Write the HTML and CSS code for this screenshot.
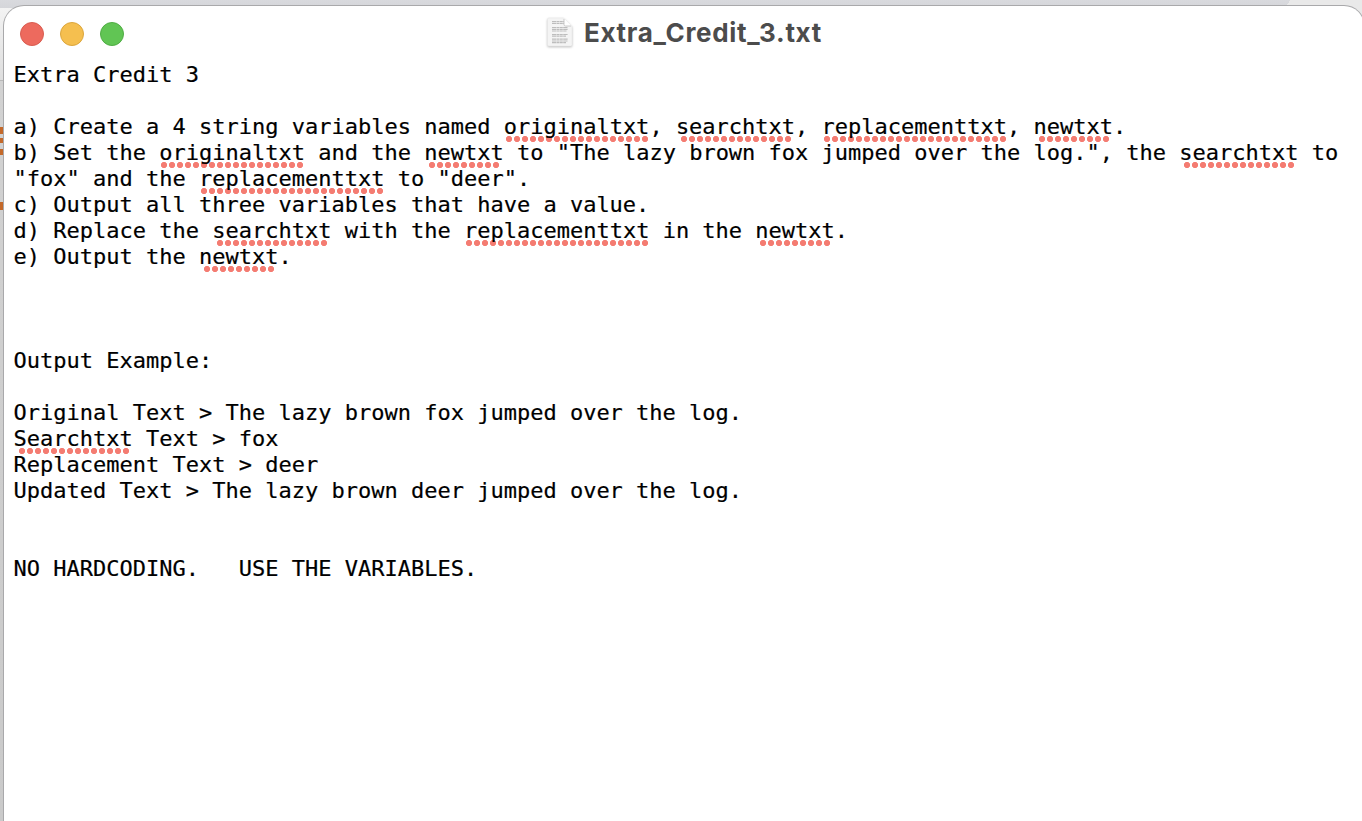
FILE: index.html
```html
<!DOCTYPE html>
<html lang="en">
<head>
    <meta charset="UTF-8">
    <meta name="viewport" content="width=device-width, initial-scale=1.0">
    <title>Extra_Credit_3.txt</title>
    <link rel="stylesheet" href="styles.css">
</head>
<body>
    <div class="window">
        <header class="titlebar">
            <div class="lights">
                <span class="light close"></span>
                <span class="light minimize"></span>
                <span class="light zoom"></span>
            </div>
            <div class="title">
                <svg class="doc-icon" width="28" height="32" viewBox="0 0 28 32">
                    <path class="page" d="M3 1H17.500L26 9.500V27.500Q26 29 24.500 29H3Q1.500 29 1.500 27.500V2.500Q1.500 1 3 1Z"/>
                    <path class="lines" d="M6 4.500H18M6 6.300H18M6 10.500H21.500M6 12.300H22M6 14H20.500M6 17.500H22M6 19.200H20M6 22.200H22M6 24H21.500M6 25.700H20"/>
                    <path class="fold" d="M18 1.500V7.500Q18 9 19.500 9H25.500Z"/>
                    <path class="crease" d="M18 2V7.500Q18 9 19.500 9H25"/>
                </svg>
                <h1>Extra_Credit_3.txt</h1>
            </div>
        </header>
<pre class="text">Extra Credit 3

a) Create a 4 string variables named <span class="typo w11">originaltxt</span>, <span class="typo w9">searchtxt</span>, <span class="typo w14">replacementtxt</span>, <span class="typo w6">newtxt</span>.
b) Set the <span class="typo w11">originaltxt</span> and the <span class="typo w6">newtxt</span> to "The lazy brown fox jumped over the log.", the <span class="typo w9">searchtxt</span> to
"fox" and the <span class="typo w14">replacementtxt</span> to "deer".
c) Output all three variables that have a value.
d) Replace the <span class="typo w9">searchtxt</span> with the <span class="typo w14">replacementtxt</span> in the <span class="typo w6">newtxt</span>.
e) Output the <span class="typo w6">newtxt</span>.



Output Example:

Original Text &gt; The lazy brown fox jumped over the log.
<span class="typo w9">Searchtxt</span> Text &gt; fox
Replacement Text &gt; deer
Updated Text &gt; The lazy brown deer jumped over the log.


NO HARDCODING.   USE THE VARIABLES.</pre>
    </div>
</body>
</html>
```

FILE: styles.css
```css
*{
    margin: 0;
    padding: 0;
    box-sizing: border-box;
}
body{
    height: 821px;
    padding: 6px 0 0 4px;
    overflow: hidden;
    /* whatever is open behind the window */
    background:
        linear-gradient(#c4692a, #c4692a) 0 127px / 4px 7px no-repeat,
        linear-gradient(#c4692a, #c4692a) 0 138px / 4px 5px no-repeat,
        linear-gradient(#c4692a, #c4692a) 0 149px / 4px 6px no-repeat,
        linear-gradient(#c4692a, #c4692a) 0 202px / 4px 8px no-repeat,
        linear-gradient(125deg, transparent 6px, #e9e9e9 6px) 1283px 0 / 79px 30px no-repeat,
        linear-gradient(#d9dade, #d5d6da) 0 0 / 100% 8px no-repeat,
        linear-gradient(#f3f3f3, #dedede 72px, #b8b8b8 72px, #b8b8b8 73px, #d2d2d2 73px, #cacaca) 0 8px no-repeat;
}
.window{
    width: 1360px;
    height: 870px;
    background-color: white;
    border-radius: 20px;
    box-shadow: 0 0 0 1px #a9a9ab;
}
.titlebar{
    display: flex;
    align-items: center;
    height: 56px;
    padding-left: 16px;
}
.lights{
    display: flex;
    gap: 16px;
}
.light{
    width: 24px;
    height: 24px;
    border-radius: 50%;
}
.close{
    background-color: #ed6a5e;
    border: 1px solid #d95c50;
}
.minimize{
    background-color: #f5bf4f;
    border: 1px solid #dca63c;
}
.zoom{
    background-color: #61c554;
    border: 1px solid #50ad44;
}
.title{
    display: flex;
    align-items: center;
    gap: 10px;
    margin: -2px 0 0 422px;
}
.title h1{
    font-family: Inter, "Liberation Sans", sans-serif;
    font-size: 26px;
    font-weight: 700;
    line-height: 32px;
    letter-spacing: 0.68px;
    color: #4c4c4c;
    white-space: nowrap;
}
.doc-icon{
    filter: drop-shadow(0 1px 1px rgba(0, 0, 0, 0.25));
}
.page{
    fill: #f4f4f4;
    stroke: #e6e6e6;
    stroke-width: 0.5;
}
.fold{
    fill: white;
}
.crease{
    fill: none;
    stroke: #bdbdbd;
    stroke-width: 0.8;
}
.lines{
    fill: none;
    stroke: #bdbdbd;
    stroke-width: 1.2;
    stroke-dasharray: 4.3 0.4 2.6 0.4 3.1 0.4;
}
.text{
    position: relative;
    z-index: 0;
    padding-left: 9.6px;
    font-family: "DejaVu Sans Mono", monospace;
    font-size: 22px;
    line-height: 26px;
    color: black;
    -webkit-text-stroke: 0.2px black;
}
.typo{
    position: relative;
}
/* spelling dots, 6px wide every 8px, drawn under the letters */
.typo::before{
    content: "";
    position: absolute;
    z-index: -1;
    top: 22px;
    left: 50%;
    width: var(--dots);
    height: 6px;
    margin-left: calc(var(--dots) / -2 + 0.3px);
    background: radial-gradient(circle at 3px 3px, #f47c72 2.8px, transparent 3.3px) 0 0 / 8px 6px repeat-x;
}
.w6{ --dots: 70px; }
.w9{ --dots: 110px; }
.w11{ --dots: 142px; }
.w14{ --dots: 182px; }
```
